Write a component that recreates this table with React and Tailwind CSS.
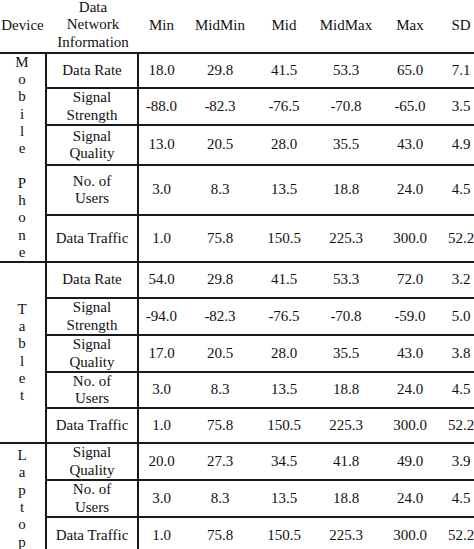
const header = ["Min", "MidMin", "Mid", "MidMax", "Max", "SD"];

const groups = [
  {
    device: "Mobile Phone",
    span: "row-span-5",
    rows: [
      ["Data Rate", ["18.0", "29.8", "41.5", "53.3", "65.0", "7.1"]],
      ["Signal Strength", ["-88.0", "-82.3", "-76.5", "-70.8", "-65.0", "3.5"]],
      ["Signal Quality", ["13.0", "20.5", "28.0", "35.5", "43.0", "4.9"]],
      ["No. of Users", ["3.0", "8.3", "13.5", "18.8", "24.0", "4.5"]],
      ["Data Traffic", ["1.0", "75.8", "150.5", "225.3", "300.0", "52.2"]],
    ],
  },
  {
    device: "Tablet",
    span: "row-span-5",
    rows: [
      ["Data Rate", ["54.0", "29.8", "41.5", "53.3", "72.0", "3.2"]],
      ["Signal Strength", ["-94.0", "-82.3", "-76.5", "-70.8", "-59.0", "5.0"]],
      ["Signal Quality", ["17.0", "20.5", "28.0", "35.5", "43.0", "3.8"]],
      ["No. of Users", ["3.0", "8.3", "13.5", "18.8", "24.0", "4.5"]],
      ["Data Traffic", ["1.0", "75.8", "150.5", "225.3", "300.0", "52.2"]],
    ],
  },
  {
    device: "Laptop",
    span: "row-span-3",
    rows: [
      ["Signal Quality", ["20.0", "27.3", "34.5", "41.8", "49.0", "3.9"]],
      ["No. of Users", ["3.0", "8.3", "13.5", "18.8", "24.0", "4.5"]],
      ["Data Traffic", ["1.0", "75.8", "150.5", "225.3", "300.0", "52.2"]],
    ],
  },
];

// two-word labels wrap onto two lines except "Data Rate" / "Data Traffic"
const label = (t) => {
  if (t === "Data Rate" || t === "Data Traffic") return [t];
  if (t === "No. of Users") return ["No. of", "Users"];
  return t.split(" ");
};

function App() {
  return (
    <div className="w-[474px] h-[549px] overflow-hidden bg-white text-[#111] font-['Liberation_Serif',serif] text-[15px] leading-[17.3px]">
      <div className="grid w-[482px] grid-cols-[47px_92px_45px_72px_56px_68px_60px_42px] grid-rows-[54px_35px_37px_40px_50px_47px_36px_37px_37px_36px_35px_37px_37px_38px]">
        {/* header */}
        <div className="flex items-center justify-center border-b-2 border-[#1a1a1a] pr-[2px] whitespace-nowrap">
          Device
        </div>
        <div className="flex flex-col items-center justify-center border-b-2 border-[#1a1a1a] pb-[2px]">
          <div>Data</div>
          <div>Network</div>
          <div>Information</div>
        </div>
        {header.map((h) => (
          <div
            key={h}
            className="flex items-center justify-center border-b-2 border-[#1a1a1a] whitespace-nowrap"
          >
            {h}
          </div>
        ))}

        {groups.map((g) => (
          <>
            <div
              key={g.device}
              className={`${g.span} flex flex-col items-center justify-center border-b-2 border-r-2 border-[#1a1a1a] pr-[1px]`}
            >
              {g.device.split("").map((c, i) => (
                <div key={i}>{c === " " ? "\u00a0" : c}</div>
              ))}
            </div>
            {g.rows.map(([name, vals], ri) => (
              <>
                <div
                  key={g.device + ri}
                  className="flex flex-col items-center justify-center border-b-2 border-r-2 border-[#1a1a1a]"
                >
                  {label(name).map((l) => (
                    <div key={l} className="whitespace-nowrap">
                      {l}
                    </div>
                  ))}
                </div>
                {vals.map((v, vi) => (
                  <div
                    key={vi}
                    className="flex items-center justify-center border-b-2 border-[#1a1a1a] whitespace-nowrap"
                  >
                    {v}
                  </div>
                ))}
              </>
            ))}
          </>
        ))}
      </div>
    </div>
  );
}

export default App;
